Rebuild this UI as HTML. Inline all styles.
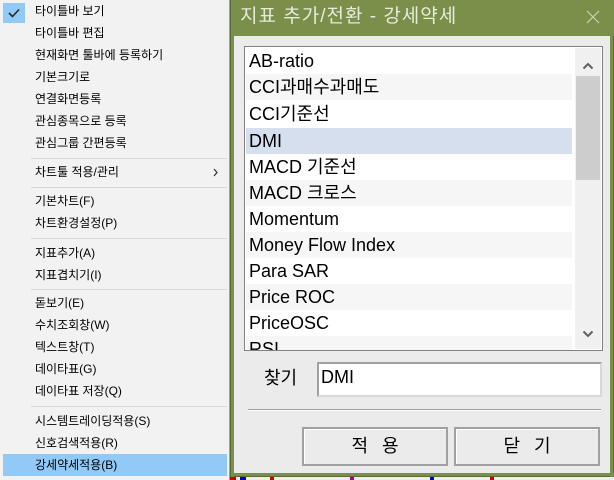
<!DOCTYPE html>
<html><head><meta charset="utf-8"><style>
*{margin:0;padding:0;box-sizing:border-box}
body{width:614px;height:480px;overflow:hidden;background:#e6e6e6;position:relative;font-family:"Liberation Sans","Malgun Gothic","Noto Sans CJK KR",sans-serif}
#menu{position:absolute;left:0;top:0;width:230px;height:480px;background:#f2f2f2;border-right:1px solid #a0a0a0}
.it{position:absolute;left:35px;font-size:12px;color:#000;line-height:22px;height:22px}
.sep{position:absolute;left:31px;width:196px;height:1px;background:#d7d7d7}
.hl{position:absolute;background:#91c9f7}
#dlg{position:absolute;left:230px;top:0;width:384px;height:477px;background:#ebebeb;border:1px solid #5a6a38;border-top:none}
#title{position:absolute;left:0;top:0;width:383px;height:36px;background:#7a8f4a;color:#e6ebdc;font-size:19px;line-height:34px;padding-left:9px;letter-spacing:1px}
#x{position:absolute;right:14px;top:10px}
#dl{position:absolute;left:0;top:36px;width:3px;height:441px;background:#7a8f4a}
#dr{position:absolute;right:0;top:36px;width:3px;height:441px;background:#7a8f4a}
#db{position:absolute;left:0;bottom:0;width:383px;height:3px;background:#7a8f4a}
#list{position:absolute;left:13px;top:46px;width:359px;height:305px;background:#fff;border:1px solid #828282;overflow:hidden}
.r{position:absolute;left:1px;width:326px;height:26px;font-size:18px;line-height:27px;padding-left:3px;color:#000}
.alt{background:#f6f6f6}
.sel{background:#d6dfee}
#sb{position:absolute;right:1px;top:1px;width:26px;height:301px;background:#f0f0f0}
#th{position:absolute;left:1px;top:28px;width:24px;height:104px;background:#cdcdcd}
.ar{position:absolute;left:7px}
#lbl{position:absolute;left:33px;top:364px;font-size:18px}
#inp{position:absolute;left:86px;top:362px;width:285px;height:35px;background:#fff;border:2px solid #a0a0a0;border-right-color:#d8d8d8;border-bottom-color:#d8d8d8;font-size:18px;line-height:26px;padding-left:2px}
#hr{position:absolute;left:17px;top:409px;width:353px;height:2px;border-top:1px solid #a0a0a0;border-bottom:1px solid #fff}
.btn{position:absolute;top:427px;width:146px;height:39px;background:#ebebeb;border:2px solid #a0a0a0;box-shadow:inset 1px 1px 0 #fff;font-size:18px;text-align:center;line-height:34px;letter-spacing:14px;padding-left:14px}
#strip{position:absolute;left:230px;top:477px;width:384px;height:3px;background:linear-gradient(90deg,#c00 0 6px,#eee 6px 10px,#00c 10px 16px,#eee 16px 40px,#c00 40px 44px,#eee 44px 120px,#a0a 120px 124px,#eee 124px 200px,#00c 200px 204px,#eee 204px 260px,#c00 260px 264px,#eee 264px)}
</style></head><body>
<div id="menu">
<div class="hl" style="left:3px;top:3px;width:22px;height:20px"></div>
<svg style="position:absolute;left:8px;top:8px" width="12" height="10"><path d="M1 5 L4.5 8.5 L11 1.5" stroke="#2a2a2a" stroke-width="1.6" fill="none"/></svg>
<div class="it" style="top:0">타이틀바 보기</div>
<div class="it" style="top:22px">타이틀바 편집</div>
<div class="it" style="top:44px">현재화면 툴바에 등록하기</div>
<div class="it" style="top:66px">기본크기로</div>
<div class="it" style="top:88px">연결화면등록</div>
<div class="it" style="top:110px">관심종목으로 등록</div>
<div class="it" style="top:132px">관심그룹 간편등록</div>
<div class="sep" style="top:158px"></div>
<div class="it" style="top:161px">차트툴 적용/관리</div>
<svg style="position:absolute;left:213px;top:168px" width="5" height="9"><path d="M1 1 L4 4.5 L1 8" stroke="#333" stroke-width="1.2" fill="none"/></svg>
<div class="sep" style="top:187px"></div>
<div class="it" style="top:190px">기본차트(F)</div>
<div class="it" style="top:212px">차트환경설정(P)</div>
<div class="sep" style="top:238px"></div>
<div class="it" style="top:242px">지표추가(A)</div>
<div class="it" style="top:264px">지표겹치기(I)</div>
<div class="sep" style="top:289px"></div>
<div class="it" style="top:292px">돋보기(E)</div>
<div class="it" style="top:314px">수치조회창(W)</div>
<div class="it" style="top:336px">텍스트창(T)</div>
<div class="it" style="top:358px">데이타표(G)</div>
<div class="it" style="top:380px">데이타표 저장(Q)</div>
<div class="sep" style="top:406px"></div>
<div class="it" style="top:410px">시스템트레이딩적용(S)</div>
<div class="it" style="top:432px">신호검색적용(R)</div>
<div class="hl" style="left:3px;top:454px;width:224px;height:22px"></div>
<div class="it" style="top:454px">강세약세적용(B)</div>
</div>
<div id="dlg">
<div id="title">지표 추가/전환 - 강세약세<svg id="x" width="14" height="14"><path d="M1 1 L13 13 M13 1 L1 13" stroke="#c9d3b5" stroke-width="1.2"/></svg></div>
<div id="dl"></div><div id="dr"></div><div id="db"></div>
<div id="list">
<div class="r" style="top:1px">AB-ratio</div>
<div class="r alt" style="top:27px">CCI과매수과매도</div>
<div class="r" style="top:54px">CCI기준선</div>
<div class="r sel" style="top:81px">DMI</div>
<div class="r" style="top:107px">MACD 기준선</div>
<div class="r alt" style="top:133px">MACD 크로스</div>
<div class="r" style="top:159px">Momentum</div>
<div class="r alt" style="top:185px">Money Flow Index</div>
<div class="r" style="top:211px">Para SAR</div>
<div class="r alt" style="top:237px">Price ROC</div>
<div class="r" style="top:263px">PriceOSC</div>
<div class="r alt" style="top:289px">RSI</div>
<div id="sb"><svg class="ar" style="top:14px" width="12" height="8"><path d="M1.5 6.5 L6 2 L10.5 6.5" stroke="#606060" stroke-width="2" fill="none"/></svg><div id="th"></div><svg class="ar" style="top:282px" width="12" height="8"><path d="M1.5 1.5 L6 6 L10.5 1.5" stroke="#606060" stroke-width="2" fill="none"/></svg></div>
</div>
<div id="lbl">찾기</div>
<div id="inp">DMI</div>
<div id="hr"></div>
<div class="btn" style="left:71px">적용</div>
<div class="btn" style="left:223px">닫기</div>
</div>
<div id="strip"></div>
</body></html>
